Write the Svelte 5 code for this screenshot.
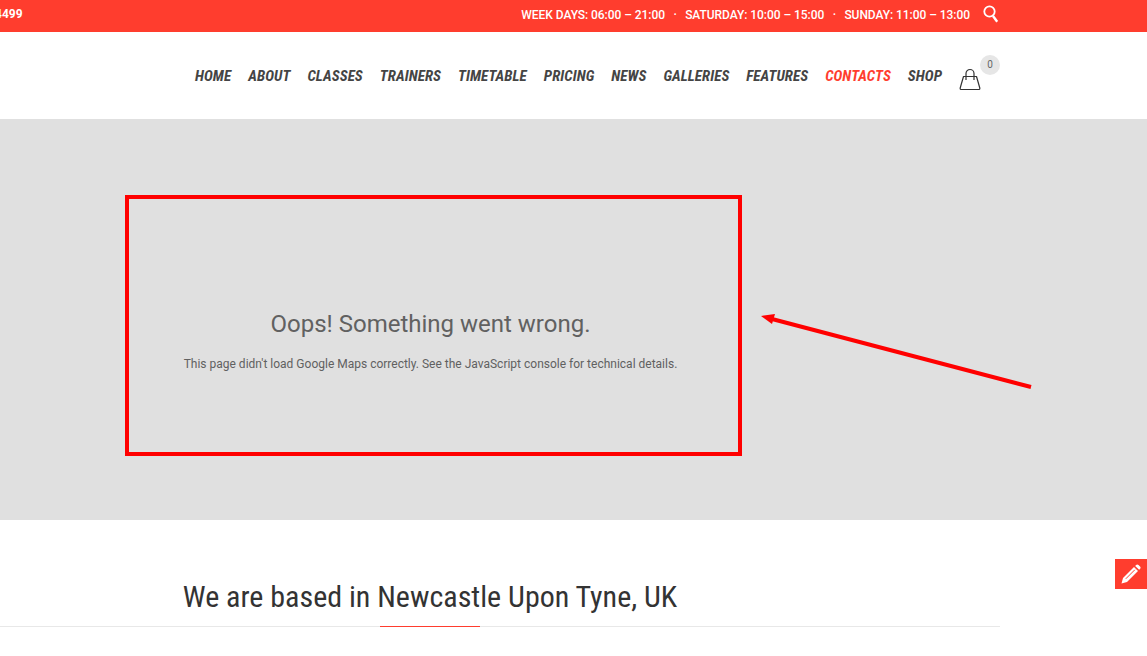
<script>
  const nav = ['Home', 'About', 'Classes', 'Trainers', 'Timetable', 'Pricing', 'News', 'Galleries', 'Features', 'Contacts', 'Shop'];
  const hours = ['Week days: 06:00 – 21:00', 'Saturday: 10:00 – 15:00', 'Sunday: 11:00 – 13:00'];
</script>

<div class="page">
  <div class="topbar">
    <span class="phone">4499</span>
    <div class="hours">
      {#each hours as item, i}
        {#if i > 0}<span class="dot">·</span>{/if}
        <span>{item}</span>
      {/each}
    </div>
    <svg class="search" width="16" height="18" viewBox="0 0 16 18" fill="none" stroke="#fff">
      <circle cx="6.500" cy="6.500" r="5.200" stroke-width="1.800" />
      <path d="M10 11l4.200 5.800" stroke-width="2.400" />
    </svg>
  </div>

  <header class="header">
    <nav class="nav">
      {#each nav as item}
        <a href="#{item.toLowerCase()}" class:active={item === 'Contacts'}>{item}</a>
      {/each}
    </nav>
    <div class="cart">
      <svg width="22" height="23" viewBox="0 0 22 23" fill="none" stroke="#333" stroke-width="1.200">
        <path d="M4.500 8.500h13l3.300 11.500q.3 1.500-1.300 1.500h-17q-1.600 0-1.300-1.500z" stroke-linejoin="round" />
        <path d="M7 12V5.500a4 4 0 0 1 8 0V12" />
      </svg>
      <span class="badge">0</span>
    </div>
  </header>

  <section class="map">
    <div class="error">
      <h2>Oops! Something went wrong.</h2>
      <p>This page didn't load Google Maps correctly. See the JavaScript console for technical details.</p>
    </div>
    <svg class="arrow" width="280" height="100" viewBox="0 0 280 100">
      <path d="M271 87L12 19" stroke="#f00" stroke-width="4" />
      <path d="M1 16L15 14L12 24z" fill="#f00" />
    </svg>
  </section>

  <section class="intro">
    <h1>We are based in Newcastle Upon Tyne, UK</h1>
    <div class="rule"><span></span></div>
  </section>

  <button class="edit" aria-label="Edit">
    <svg width="20" height="20" viewBox="0 0 20 20">
      <path d="M.500 19.500L2 14 13 3l4 4L6 18z" fill="#fff" />
      <path d="M4.800 14.800L13.800 5.800" stroke="#ff3d2e" stroke-width="1" />
      <path d="M14.200 1.900l.9-.9a1.700 1.700 0 0 1 2.400 0l1.500 1.500a1.700 1.700 0 0 1 0 2.400l-.9.900z" fill="#fff" />
    </svg>
  </button>
</div>

<style>
  :global(body) {
    margin: 0;
    background: #fff;
    font-family: Roboto, "Liberation Sans", sans-serif;
  }

  .page {
    position: relative;
    height: 656px;
    overflow: hidden;
  }

  .topbar {
    display: flex;
    align-items: center;
    height: 32px;
    background: #ff3d2e;
    color: #fff;
    font-size: 12px;
    font-weight: 500;
    text-transform: uppercase;
  }

  .phone {
    margin-left: -5px;
    margin-top: -4px;
    font-weight: 700;
  }

  .hours {
    display: flex;
    gap: 8.400px;
    margin-left: auto;
    margin-right: 13px;
    margin-top: -2px;
    letter-spacing: -0.05px;
  }

  .search {
    margin-right: 148px;
    margin-top: -5px;
  }

  .header {
    display: flex;
    align-items: center;
    justify-content: flex-end;
    width: 1000px;
    height: 87px;
  }

  .nav {
    display: flex;
    gap: 17px;
  }

  .nav a {
    color: #444;
    font-size: 15px;
    font-weight: 700;
    font-style: italic;
    font-stretch: condensed;
    letter-spacing: 0.08px;
    text-decoration: none;
    text-transform: uppercase;
  }

  .nav a.active {
    color: #ff3d2e;
  }

  .cart {
    position: relative;
    display: flex;
    margin-left: 17px;
    margin-right: 19px;
    margin-top: 7px;
  }

  .badge {
    position: absolute;
    top: -13px;
    left: 21px;
    width: 20px;
    height: 20px;
    border-radius: 50%;
    background: #e6e6e6;
    color: #666;
    font-size: 10px;
    line-height: 20px;
    text-align: center;
  }

  .map {
    position: relative;
    height: 401px;
    background: #e0e0e0;
  }

  .error {
    position: absolute;
    left: 125px;
    top: 76px;
    display: flex;
    flex-direction: column;
    align-items: center;
    justify-content: center;
    box-sizing: border-box;
    width: 617px;
    height: 261px;
    padding: 30px 6px 0 0;
    border: 4px solid #f00;
    color: #616161;
  }

  .error h2 {
    margin: 0;
    font-size: 24px;
    font-weight: 400;
    line-height: 30px;
  }

  .error p {
    margin: 17px 0 0;
    font-size: 12px;
    line-height: 16px;
  }

  .arrow {
    position: absolute;
    left: 760px;
    top: 181px;
    overflow: visible;
  }

  .intro {
    width: 1000px;
    padding-top: 59px;
  }

  .intro h1 {
    width: 860px;
    margin: 0;
    color: #333;
    font-size: 30px;
    font-weight: 400;
    font-stretch: condensed;
    line-height: 36px;
    text-align: center;
  }

  .rule {
    display: flex;
    justify-content: center;
    width: 860px;
    height: 1px;
    margin-top: 11px;
    box-shadow: 140px 0 0 #e8e8e8;
    background: #e8e8e8;
  }

  .rule span {
    width: 100px;
    background: #ff3d2e;
  }

  .edit {
    position: absolute;
    right: 0;
    top: 559px;
    display: flex;
    align-items: center;
    justify-content: center;
    width: 32px;
    height: 30px;
    padding: 0;
    border: 0;
    background: #ff3d2e;
  }
</style>
